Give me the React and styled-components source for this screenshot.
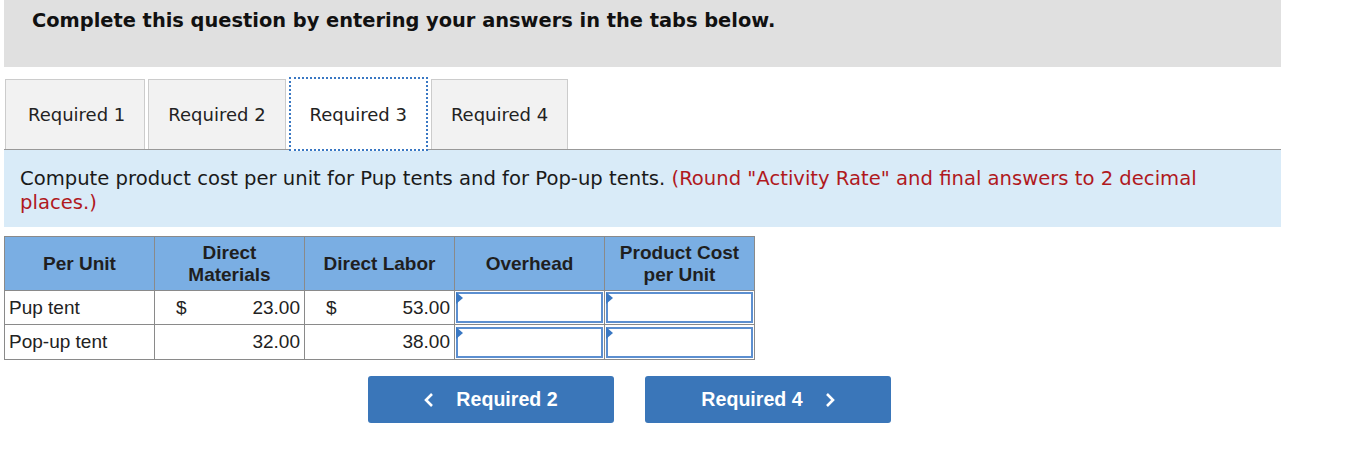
// Libraries
import React from "react";
import styled, { createGlobalStyle } from "styled-components";

const GlobalStyle = createGlobalStyle`
  body {
    margin: 0;
    background: #ffffff;
    font-family: "DejaVu Sans", Verdana, sans-serif;
    color: #1a1a1a;
  }
`;

const Page = styled.div`
  width: 1277px;
  padding-left: 4px;
`;

const Banner = styled.div`
  background-color: #e0e0e0;
  height: 67px;
  padding: 9px 0 0 28px;
  box-sizing: border-box;
  font-family: "DejaVu Sans", Verdana, sans-serif;
  font-weight: bold;
  font-size: 19.4px;
  color: #111;
`;

const TabBar = styled.div`
  display: flex;
  margin-top: 12px;
  padding-left: 1px;
  gap: 3px;
  height: 70px;
  position: relative;
  z-index: 1;
`;

const Tab = styled.div`
  display: flex;
  align-items: center;
  justify-content: center;
  box-sizing: border-box;
  padding: 0 19px;
  height: ${(p) => (p.$active ? "74px" : "70px")};
  margin-top: ${(p) => (p.$active ? "-2px" : "0")};
  background: ${(p) => (p.$active ? "#ffffff" : "#f2f2f2")};
  border: ${(p) => (p.$active ? "2px dotted #3a78c3" : "1px solid #cccccc")};
  border-bottom: ${(p) => (p.$active ? "2px dotted #3a78c3" : "none")};
  font-size: 18px;
  color: #222;

  &:first-child {
    padding-left: 22px;
  }
`;

const Prompt = styled.div`
  background-color: #d9ebf8;
  border-top: 1px solid #999999;
  min-height: 78px;
  box-sizing: border-box;
  padding: 17px 16px 8px;
  font-size: 19.6px;
  line-height: 24px;
  color: #1a1a1a;
`;

const Hint = styled.span`
  color: #b0191e;
`;

const Grid = styled.table`
  margin-top: 9px;
  border-collapse: collapse;
  font-family: "Liberation Sans", Arial, sans-serif;
  font-size: 19px;
  color: #222;
`;

const HeadCell = styled.th`
  width: 150px;
  height: 54px;
  box-sizing: border-box;
  background-color: #7aaee3;
  border: 1px solid #8a8a8a;
  font-weight: bold;
  line-height: 22px;
  padding: 0 6px;
  color: #1f1f1f;
`;

const Cell = styled.td`
  border: 1px solid #8a8a8a;
  height: ${(p) => (p.$tall ? "35px" : "34px")};
  padding: 0 4px;
  box-sizing: border-box;
`;

const Money = styled.div`
  display: flex;
  justify-content: space-between;
  align-items: center;
  padding-left: 17px;
`;

const InputCell = styled.td`
  border: 1px solid #8a8a8a;
  padding: 1px;
  position: relative;
`;

const Entry = styled.div`
  height: 31px;
  box-sizing: border-box;
  border: 2px solid #5c8fd0;
  background: #fff;
  position: relative;

  &::before {
    content: "";
    position: absolute;
    left: -2px;
    top: -2px;
    border-top: 6px solid transparent;
    border-bottom: 6px solid transparent;
    border-left: 7px solid #3a78c3;
  }
`;

const Nav = styled.div`
  display: flex;
  gap: 31px;
  margin: 16px 0 0 364px;
`;

const NavButton = styled.button`
  width: 246px;
  height: 47px;
  display: flex;
  align-items: center;
  justify-content: center;
  gap: 22px;
  background-color: #3a76b9;
  border: none;
  border-radius: 3px;
  color: #ffffff;
  font-family: "Liberation Sans", Arial, sans-serif;
  font-weight: bold;
  font-size: 19.6px;
`;

function Chevron({ left }) {
  return (
    <svg width="10" height="16" viewBox="0 0 10 16">
      <polyline
        points={left ? "8,2 2,8 8,14" : "2,2 8,8 2,14"}
        fill="none"
        stroke="#fff"
        strokeWidth="2.6"
      />
    </svg>
  );
}

const rows = [
  { label: "Pup tent", dm: "23.00", dl: "53.00", sign: true },
  { label: "Pop-up tent", dm: "32.00", dl: "38.00", sign: false },
];

function App() {
  return (
    <Page>
      <GlobalStyle />
      <Banner>Complete this question by entering your answers in the tabs below.</Banner>

      {/* Tabs */}
      <TabBar>
        <Tab>Required 1</Tab>
        <Tab>Required 2</Tab>
        <Tab $active>Required 3</Tab>
        <Tab>Required 4</Tab>
      </TabBar>

      <Prompt>
        Compute product cost per unit for Pup tents and for Pop-up tents.{" "}
        <Hint>(Round "Activity Rate" and final answers to 2 decimal places.)</Hint>
      </Prompt>

      <Grid>
        <thead>
          <tr>
            <HeadCell>Per Unit</HeadCell>
            <HeadCell>Direct<br />Materials</HeadCell>
            <HeadCell>Direct Labor</HeadCell>
            <HeadCell>Overhead</HeadCell>
            <HeadCell>Product Cost<br />per Unit</HeadCell>
          </tr>
        </thead>
        <tbody>
          {rows.map((r, i) => (
            <tr key={r.label}>
              <Cell $tall={i === 1}>{r.label}</Cell>
              <Cell $tall={i === 1}>
                <Money>
                  <span>{r.sign ? "$" : ""}</span>
                  <span>{r.dm}</span>
                </Money>
              </Cell>
              <Cell $tall={i === 1}>
                <Money>
                  <span>{r.sign ? "$" : ""}</span>
                  <span>{r.dl}</span>
                </Money>
              </Cell>
              <InputCell><Entry /></InputCell>
              <InputCell><Entry /></InputCell>
            </tr>
          ))}
        </tbody>
      </Grid>

      {/* Navigation */}
      <Nav>
        <NavButton>
          <Chevron left />
          Required 2
        </NavButton>
        <NavButton>
          Required 4
          <Chevron />
        </NavButton>
      </Nav>
    </Page>
  );
}

export default App;
